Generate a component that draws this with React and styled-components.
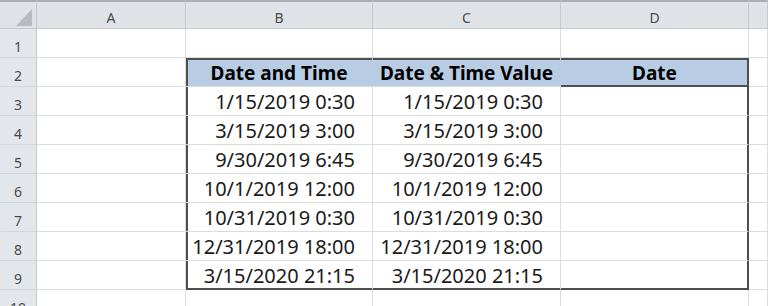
import React from "react";
import styled, { createGlobalStyle } from "styled-components";

const GlobalStyle = createGlobalStyle`
  html, body { margin: 0; padding: 0; background: #ffffff; overflow: hidden; }
  body { font-family: "Noto Sans", "Open Sans", sans-serif; }
`;

const DARK = "#4f4f4f";
const GRID = "#dcdcdc";

const Sheet = styled.div`
  display: grid;
  grid-template-columns: 37px 149px 187px 188px 188px 1fr;
  grid-auto-rows: 29px;
  width: 768px;
  height: 306px;
  overflow: hidden;
`;

const Corner = styled.div`
  box-sizing: border-box;
  background: #dfe3e8;
  border-top: 2px solid #abaeb2;
  border-right: 1px solid #c6cacf;
  border-bottom: 1px solid #c6cacf;
  position: relative;
  svg { position: absolute; left: 16px; top: 7px; }
`;

const ColHead = styled.div`
  box-sizing: border-box;
  background: #dfe3e8;
  border-top: 2px solid #abaeb2;
  border-right: 1px solid #c6cacf;
  border-bottom: 1px solid #c6cacf;
  display: flex;
  align-items: flex-end;
  justify-content: center;
  font-size: 14px;
  line-height: 20px;
  color: #4a4a4a;
`;

const RowHead = styled.div`
  box-sizing: border-box;
  background: #e3e7ec;
  border-right: 1px solid #c6cacf;
  border-bottom: 1px solid #d3d7dc;
  display: flex;
  align-items: flex-end;
  justify-content: center;
  font-size: 14px;
  line-height: 20px;
  color: #4a4a4a;
`;

const shadow = (p) => {
  const s = [];
  if (p.$top) s.push(`inset 0 2px 0 ${DARK}`);
  if (p.$left) s.push(`inset 2px 0 0 ${DARK}`);
  if (p.$right) s.push(`inset -1px 0 0 ${DARK}`);
  if (p.$bottom) s.push(`inset 0 -1px 0 ${DARK}`);
  return s.length ? s.join(", ") : "none";
};

const Cell = styled.div`
  box-sizing: border-box;
  background: ${(p) => (p.$head ? "#b8cce4" : "#ffffff")};
  border-right: 1px solid
    ${(p) => (p.$right ? DARK : p.$head ? "#b8cce4" : GRID)};
  border-bottom: 1px solid ${(p) => (p.$bottom ? DARK : GRID)};
  box-shadow: ${shadow};
  display: flex;
  align-items: flex-end;
  justify-content: ${(p) => (p.$head ? "center" : "flex-end")};
  padding-right: ${(p) => (p.$head ? "0" : "17px")};
  font-size: ${(p) => (p.$head ? "19px" : "20px")};
  font-weight: ${(p) => (p.$head ? 700 : 400)};
  line-height: 26px;
  color: ${(p) => (p.$head ? "#000000" : "#1a1a1a")};
  white-space: nowrap;
`;

const data = [
  "1/15/2019 0:30",
  "3/15/2019 3:00",
  "9/30/2019 6:45",
  "10/1/2019 12:00",
  "10/31/2019 0:30",
  "12/31/2019 18:00",
  "3/15/2020 21:15",
];

export default function App() {
  const rows = [];
  for (let r = 1; r <= 10; r++) {
    rows.push(<RowHead key={`h${r}`}>{r}</RowHead>);
    rows.push(<Cell key={`a${r}`} />);
    if (r === 2) {
      rows.push(<Cell key="b2" $head $top $left>Date and Time</Cell>);
      rows.push(<Cell key="c2" $head $top>Date &amp; Time Value</Cell>);
      rows.push(<Cell key="d2" $head $top $right $bottom>Date</Cell>);
    } else if (r >= 3 && r <= 9) {
      const last = r === 9;
      const v = data[r - 3];
      rows.push(<Cell key={`b${r}`} $left $bottom={last}>{v}</Cell>);
      rows.push(<Cell key={`c${r}`} $bottom={last}>{v}</Cell>);
      rows.push(<Cell key={`d${r}`} $right $bottom={last} />);
    } else {
      rows.push(<Cell key={`b${r}`} />);
      rows.push(<Cell key={`c${r}`} />);
      rows.push(<Cell key={`d${r}`} />);
    }
    rows.push(<Cell key={`e${r}`} />);
  }
  return (
    <>
      <GlobalStyle />
      <Sheet>
        <Corner>
          <svg width="17" height="18" viewBox="0 0 17 18">
            <polygon points="16,0 16,17 0,17" fill="#b7babf" />
          </svg>
        </Corner>
        <ColHead>A</ColHead>
        <ColHead>B</ColHead>
        <ColHead>C</ColHead>
        <ColHead>D</ColHead>
        <ColHead />
        {rows}
      </Sheet>
    </>
  );
}
